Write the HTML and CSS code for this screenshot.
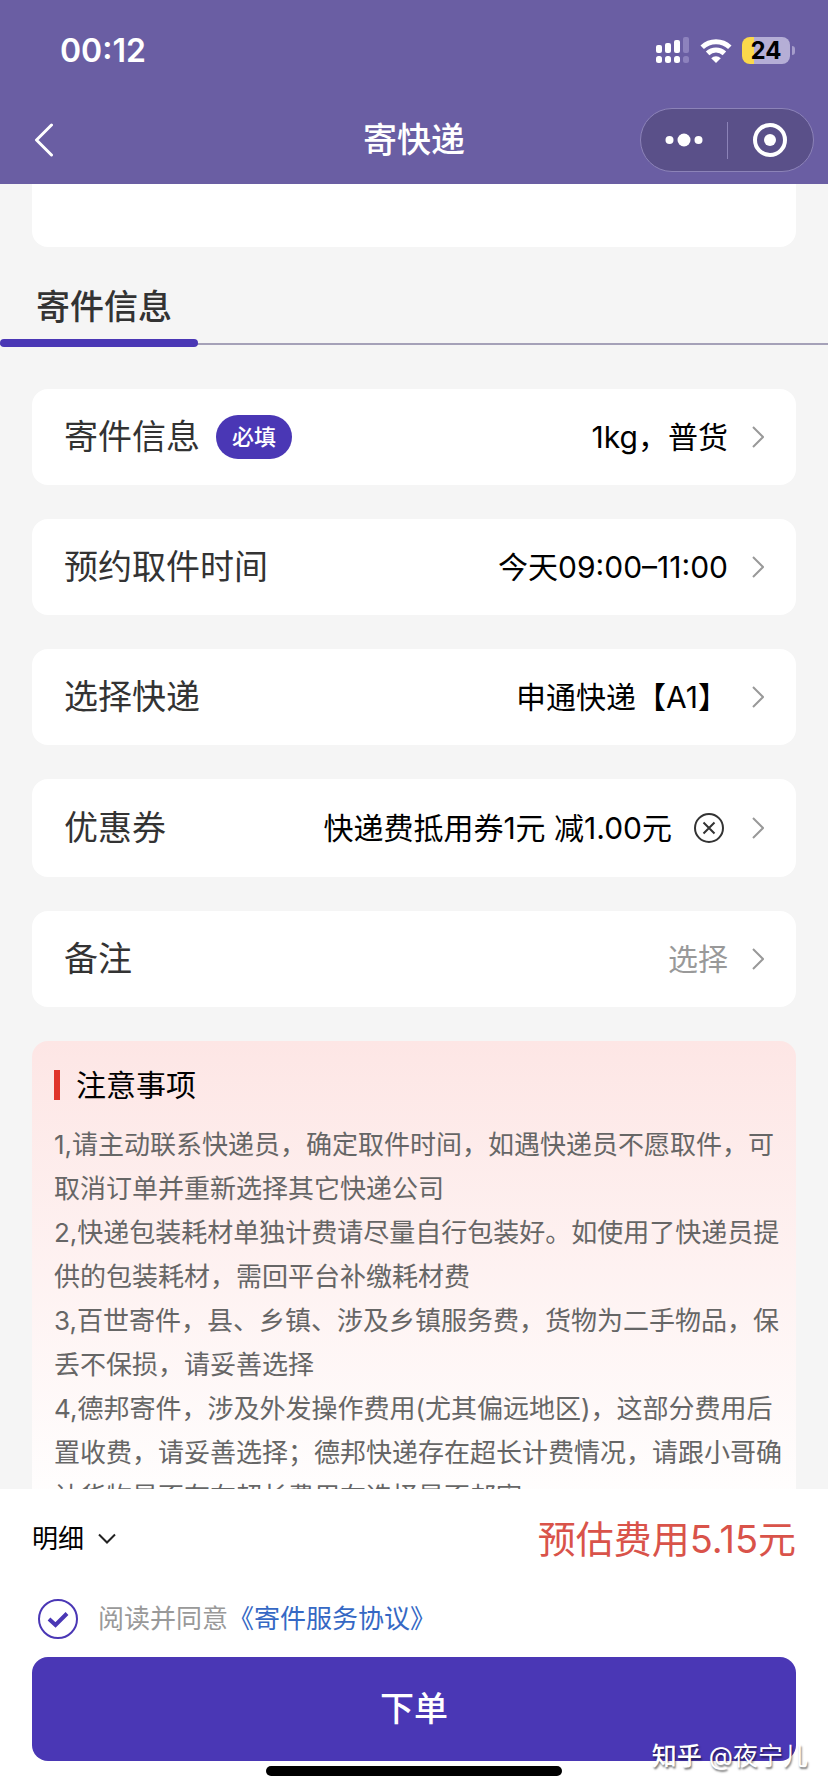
FILE: index.html
```html
<!DOCTYPE html>
<html lang="zh-CN">
<head>
<meta charset="utf-8">
<meta name="viewport" content="width=device-width, initial-scale=1">
<title>寄快递</title>
<link rel="stylesheet" href="styles.css">
</head>
<body>
<div class="app">
  <header class="header">
    <div class="status">
      <span class="clock">00:12</span>
      <div class="status-icons">
        <svg class="signal" viewBox="0 0 34 28" aria-hidden="true">
          <g fill="#fff">
            <rect x="0" y="9" width="6" height="8" rx="2"/><rect x="9" y="7" width="6" height="10" rx="2"/><rect x="18" y="4" width="6" height="13" rx="2"/>
            <rect x="0" y="20" width="6" height="7" rx="2.5"/><rect x="9" y="20" width="6" height="7" rx="2.5"/><rect x="18" y="20" width="6" height="7" rx="2.5"/>
          </g>
          <g fill="#8d82bd"><rect x="27" y="1" width="6" height="16" rx="2"/><rect x="27" y="20" width="6" height="7" rx="2.5"/></g>
        </svg>
        <svg class="wifi" viewBox="0 0 32 25" aria-hidden="true">
          <g fill="none" stroke="#fff" stroke-width="5">
            <path d="M2.2 9.2A20 20 0 0 1 29.8 9.2"/>
            <path d="M7.6 15.4A12 12 0 0 1 24.4 15.4"/>
          </g>
          <path fill="#fff" d="M16 25L11.2 20.2A6.8 6.8 0 0 1 20.8 20.2Z"/>
        </svg>
        <div class="battery"><span class="battery-level">24</span></div>
      </div>
    </div>
    <nav class="navbar">
      <button class="back" type="button" aria-label="返回">
        <svg viewBox="0 0 20 34" width="20" height="34"><path d="M17.500 2L2.500 17L17.500 32" fill="none" stroke="#fff" stroke-width="3" stroke-linecap="round" stroke-linejoin="round"/></svg>
      </button>
      <h1 class="title">寄快递</h1>
      <div class="capsule">
        <button class="capsule-btn" type="button" aria-label="更多">
          <svg viewBox="0 0 40 16" width="40" height="16" fill="#fff"><circle cx="5.500" cy="8" r="4"/><circle cx="20" cy="8" r="6.500"/><circle cx="34.500" cy="8" r="4"/></svg>
        </button>
        <button class="capsule-btn" type="button" aria-label="关闭">
          <svg viewBox="0 0 36 36" width="36" height="36"><circle cx="18" cy="18" r="15" fill="none" stroke="#fff" stroke-width="4"/><circle cx="18" cy="18" r="6" fill="#fff"/></svg>
        </button>
      </div>
    </nav>
  </header>

  <main class="content">
    <div class="card card-tail"></div>
    <div class="tabs"><h2 class="tab">寄件信息</h2></div>

    <div class="rows">
      <button class="card row" type="button">
        <span class="label">寄件信息</span><span class="badge">必填</span>
        <span class="value">1kg，普货</span>
        <svg class="arrow" viewBox="0 0 12 22"><path d="M1 1L11 11L1 21"/></svg>
      </button>
      <button class="card row" type="button">
        <span class="label">预约取件时间</span>
        <span class="value">今天09:00–11:00</span>
        <svg class="arrow" viewBox="0 0 12 22"><path d="M1 1L11 11L1 21"/></svg>
      </button>
      <button class="card row" type="button">
        <span class="label">选择快递</span>
        <span class="value">申通快递【A1】</span>
        <svg class="arrow" viewBox="0 0 12 22"><path d="M1 1L11 11L1 21"/></svg>
      </button>
      <div class="card row coupon">
        <span class="label">优惠券</span>
        <span class="value">快递费抵用券1元 减1.00元</span>
        <button class="clear" type="button" aria-label="移除优惠券">
          <svg viewBox="0 0 30 30" width="30" height="30" fill="none" stroke="#333" stroke-width="2"><circle cx="15" cy="15" r="14"/><path d="M9.500 9.500L20.500 20.500M20.500 9.500L9.500 20.500"/></svg>
        </button>
        <svg class="arrow" viewBox="0 0 12 22"><path d="M1 1L11 11L1 21"/></svg>
      </div>
      <button class="card row" type="button">
        <span class="label">备注</span>
        <span class="value placeholder">选择</span>
        <svg class="arrow" viewBox="0 0 12 22"><path d="M1 1L11 11L1 21"/></svg>
      </button>
    </div>

    <section class="notice">
      <h3 class="notice-title">注意事项</h3>
      <p>1,请主动联系快递员，确定取件时间，如遇快递员不愿取件，可取消订单并重新选择其它快递公司</p>
      <p>2,快递包装耗材单独计费请尽量自行包装好。如使用了快递员提供的包装耗材，需回平台补缴耗材费</p>
      <p>3,百世寄件，县、乡镇、涉及乡镇服务费，货物为二手物品，保丢不保损，请妥善选择</p>
      <p>4,德邦寄件，涉及外发操作费用(尤其偏远地区)，这部分费用后置收费，请妥善选择；德邦快递存在超长计费情况，请跟小哥确认货物是否存在超长费用在选择是否邮寄</p>
    </section>
  </main>

  <footer class="footer">
    <div class="summary">
      <button class="detail" type="button">明细
        <svg viewBox="0 0 20 12" width="20" height="12"><path d="M2 1.500L10 9.500L18 1.500" fill="none" stroke="#222" stroke-width="2"/></svg>
      </button>
      <strong class="price">预估费用5.15元</strong>
    </div>
    <div class="agree">
      <input class="check" type="checkbox" id="agree" checked>
      <label for="agree">阅读并同意</label><a class="link" href="#">《寄件服务协议》</a>
    </div>
    <button class="submit" type="button">下单</button>
    <div class="home-bar"></div>
    <div class="watermark"><b>知乎</b> @夜宁儿</div>
  </footer>
</div>
</body>
</html>
```

FILE: styles.css
```css
* { box-sizing: border-box; }

body {
  margin: 0;
  background: #f5f5f5;
  color: #000;
  font-family: Inter, "Noto Sans CJK SC", sans-serif;
}

button {
  margin: 0;
  padding: 0;
  border: 0;
  background: none;
  color: inherit;
  font: inherit;
}

svg { display: block; }
h1, h2, h3, p { margin: 0; }

.app {
  display: flex;
  flex-direction: column;
  height: 100vh;
  overflow: hidden;
}

/* Header */
.header {
  flex: none;
  background: #6a5ea3;
  color: #fff;
}

.status {
  display: flex;
  align-items: center;
  justify-content: space-between;
  height: 100px;
  padding: 0 34px 0 60px;
}

.clock {
  font-size: 32px;
  font-weight: 600;
}

.status-icons {
  display: flex;
  align-items: center;
  gap: 10px;
}

.signal { width: 34px; height: 28px; }
.wifi { width: 32px; height: 25px; }

.battery {
  position: relative;
  margin-right: 4px;
}

.battery-level {
  display: block;
  width: 48px;
  border-radius: 8px;
  background: linear-gradient(90deg, #fbd84b 25%, #b5aed6 25%);
  color: #000;
  font-size: 24px;
  font-weight: 700;
  line-height: 27px;
  text-align: center;
}

.battery::after {
  content: "";
  position: absolute;
  top: 9px;
  right: -5px;
  width: 3px;
  height: 9px;
  border-radius: 0 4px 4px 0;
  background: #a69dcb;
}

.navbar {
  display: grid;
  grid-template-columns: 1fr auto 1fr;
  align-items: center;
  padding: 8px 14px 12px 34px;
}

.back { justify-self: start; }

.title {
  margin-right: 20px;
  font-size: 34px;
  font-weight: 500;
  line-height: 48px;
}

.capsule {
  justify-self: end;
  display: flex;
  align-items: center;
  width: 174px;
  height: 64px;
  border: 1px solid #8c83b8;
  border-radius: 32px;
  background: #5a5089;
}

.capsule-btn {
  flex: 1;
  display: flex;
  justify-content: center;
  align-items: center;
  height: 37px;
}

.capsule-btn + .capsule-btn { border-left: 1px solid #8c83b8; }

/* Content */
.content {
  flex: 1;
  min-height: 0;
  overflow: hidden;
}

.card {
  border-radius: 16px;
  background: #fff;
}

.card-tail {
  height: 63px;
  margin: 0 32px;
  border-radius: 0 0 16px 16px;
}

.tabs {
  margin-top: 36px;
  background: linear-gradient(#a5a1b8, #a5a1b8) 0 calc(100% - 2px) / 100% 2px no-repeat;
}

.tab {
  width: 198px;
  padding-left: 36px;
  color: #333;
  font-size: 34px;
  font-weight: 500;
  line-height: 48px;
}

.tab::after {
  content: "";
  display: block;
  height: 8px;
  margin: 8px 0 0 -36px;
  border-radius: 4px;
  background: #4a37b5;
}

.rows {
  display: grid;
  gap: 34px;
  margin: 42px 32px 0;
}

.row {
  display: flex;
  align-items: center;
  width: 100%;
  min-height: 96px;
  padding: 0 32px;
  text-align: left;
}

.coupon { min-height: 98px; }

.label {
  color: #333;
  font-size: 34px;
  line-height: 48px;
}

.badge {
  margin-left: 16px;
  padding: 0 16px;
  border-radius: 22px;
  background: #4a37b5;
  color: #fff;
  font-size: 22px;
  font-weight: 500;
  line-height: 44px;
}

.value {
  margin-left: auto;
  font-size: 30px;
  line-height: 44px;
}

.placeholder { color: #999; }

.clear { margin: 0 4px 0 22px; }

.arrow {
  width: 12px;
  height: 22px;
  margin-left: 24px;
  fill: none;
  stroke: #999;
  stroke-width: 2;
}

.notice {
  margin: 34px 32px 0;
  padding: 22px 12px 40px 22px;
  border-radius: 16px;
  background: linear-gradient(#fde6e5, #fff 480px);
  color: #666;
  font-size: 26px;
  line-height: 44px;
}

.notice-title {
  display: flex;
  align-items: center;
  gap: 16px;
  margin-bottom: 16px;
  color: #000;
  font-size: 30px;
  font-weight: 400;
  line-height: 44px;
}

.notice-title::before {
  content: "";
  width: 6px;
  height: 30px;
  background: #e0352b;
}

/* Footer */
.footer {
  position: relative;
  flex: none;
  padding: 22px 32px 16px;
  background: #fff;
}

.summary {
  display: flex;
  align-items: center;
  justify-content: space-between;
}

.detail {
  display: flex;
  align-items: center;
  gap: 13px;
  font-size: 26px;
  line-height: 36px;
}

.price {
  color: #d9534a;
  font-size: 38px;
  font-weight: 400;
  line-height: 56px;
}

.agree {
  display: flex;
  align-items: center;
  margin-top: 30px;
  color: #999;
  font-size: 26px;
  line-height: 44px;
}

.check {
  appearance: none;
  width: 40px;
  height: 40px;
  margin: 0 20px 0 6px;
  border: 2px solid #4a37b5;
  border-radius: 50%;
  background: url("data:image/svg+xml,%3Csvg xmlns='http://www.w3.org/2000/svg' viewBox='0 0 36 36'%3E%3Cpath d='M9 18L15.500 24L27 12.500' fill='none' stroke='%234a37b5' stroke-width='4'/%3E%3C/svg%3E") center / 36px 36px no-repeat;
}

.link {
  color: #3568c4;
  text-decoration: none;
}

.submit {
  display: block;
  width: 100%;
  margin-top: 16px;
  border-radius: 16px;
  background: #4a37b5;
  color: #fff;
  font-size: 34px;
  font-weight: 500;
  line-height: 104px;
}

.home-bar {
  width: 296px;
  height: 10px;
  margin: 5px auto 0;
  border-radius: 5px;
  background: #000;
}

.watermark {
  position: absolute;
  right: 20px;
  bottom: 18px;
  color: #fff;
  font-size: 25px;
  line-height: 36px;
  text-shadow: 1px 2px 2px rgba(0, 0, 0, 0.55);
}

.watermark b { font-weight: 500; }
```
